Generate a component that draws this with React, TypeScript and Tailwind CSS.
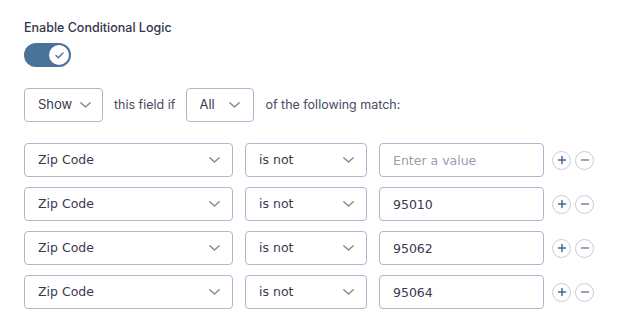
import { useState } from "react"

interface Rule {
  field: string
  operator: string
  value: string
}

const rules: Rule[] = [
  { field: "Zip Code", operator: "is not", value: "" },
  { field: "Zip Code", operator: "is not", value: "95010" },
  { field: "Zip Code", operator: "is not", value: "95062" },
  { field: "Zip Code", operator: "is not", value: "95064" },
]

const Chevron = () => (
  <svg width="11" height="6" viewBox="0 0 11 6" fill="none" className="shrink-0">
    <path d="M0.75 0.75L5.5 5L10.25 0.75" stroke="#7d8094" strokeWidth="1.2" strokeLinecap="round" strokeLinejoin="round" />
  </svg>
)

const SelectBox = ({ label, className, font }: { label: string; className: string; font: string }) => (
  <div
    className={`h-[34px] shrink-0 flex items-center justify-between border border-[#b4b3cf] rounded-[4px] bg-white text-[#3a3a4e] ${className}`}
    style={{ fontFamily: font }}
  >
    <span className="whitespace-nowrap">{label}</span>
    <Chevron />
  </div>
)

const CircleButton = ({ minus }: { minus?: boolean }) => (
  <button className="w-[19px] h-[19px] rounded-full border border-[#c9ccd8] bg-white flex items-center justify-center">
    <svg width="10" height="10" viewBox="0 0 10 10" fill="none">
      <path d="M1.5 5H8.5" stroke={minus ? "#7d8296" : "#44688f"} strokeWidth="1.5" strokeLinecap="round" />
      {!minus && <path d="M5 1.5V8.5" stroke="#44688f" strokeWidth="1.5" strokeLinecap="round" />}
    </svg>
  </button>
)

const App = () => {
  const [enabled, setEnabled] = useState(true)
  const inter = "Inter, 'Liberation Sans', sans-serif"
  const dejavu = "'DejaVu Sans', Verdana, sans-serif"

  return (
    <div className="w-[618px] h-[332px] bg-white px-6 pt-[20px]" style={{ fontFamily: inter }}>
      <div className="text-[12.5px] leading-[16px] font-medium text-[#34354a]">Enable Conditional Logic</div>

      <button
        onClick={() => setEnabled(!enabled)}
        className="mt-[7px] w-[47px] h-[24px] rounded-full bg-[#4b7399] flex items-center justify-end pr-[2px]"
      >
        <span className="w-[20px] h-[20px] rounded-full bg-white flex items-center justify-center">
          <svg width="9" height="7" viewBox="0 0 9 7" fill="none">
            <path d="M1 3.6L3.3 5.8L8 1" stroke="#4b7399" strokeWidth="1.4" strokeLinecap="round" strokeLinejoin="round" />
          </svg>
        </span>
      </button>

      <div className="mt-[21px] flex items-center text-[12.5px] text-[#4a4b5e] whitespace-nowrap">
        <SelectBox label="Show" className="w-[79px] pl-[13px] pr-[11px] text-[13px]" font={inter} />
        <span className="ml-[11px] mr-[11px]">this field if</span>
        <SelectBox label="All" className="w-[68px] pl-[12px] pr-[13px] text-[13px]" font={inter} />
        <span className="ml-[11px]">of the following match:</span>
      </div>

      <div className="mt-[21px] flex flex-col gap-[10px]">
        {rules.map((rule, i) => (
          <div key={i} className="flex items-center">
            <SelectBox label={rule.field} className="w-[209px] pl-[13px] pr-[12px] text-[12.5px]" font={dejavu} />
            <SelectBox label={rule.operator} className="w-[122px] ml-[12px] pl-[13px] pr-[12px] text-[12.5px]" font={dejavu} />
            <input
              defaultValue={rule.value}
              placeholder="Enter a value"
              className="w-[165px] h-[34px] ml-[12px] px-[13px] border border-[#b4b3cf] rounded-[4px] text-[12.5px] text-[#3a3a4e] placeholder:text-[#9b9caf] outline-none"
              style={{ fontFamily: dejavu }}
            />
            <div className="ml-[8px] flex gap-[4px]">
              <CircleButton />
              <CircleButton minus />
            </div>
          </div>
        ))}
      </div>
    </div>
  )
}

export default App
